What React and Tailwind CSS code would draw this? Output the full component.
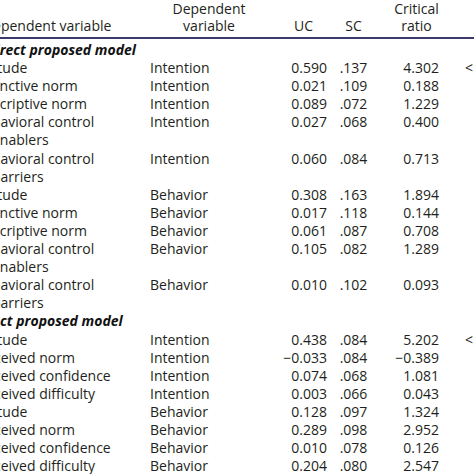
import React from "react";

// Path-model coefficient table, cropped on both sides like the source figure
const rows = [
  { head: "Direct proposed model", off: "-ml-[14px]" },
  { label: "Attitude", dep: "Intention", uc: "0.590", sc: ".137", cr: "4.302", p: "<.001" },
  { label: "Injunctive norm", dep: "Intention", uc: "0.021", sc: ".109", cr: "0.188" },
  { label: "Descriptive norm", dep: "Intention", uc: "0.089", sc: ".072", cr: "1.229" },
  { label: "Behavioral control", dep: "Intention", uc: "0.027", sc: ".068", cr: "0.400" },
  { cont: "enablers" },
  { label: "Behavioral control", dep: "Intention", uc: "0.060", sc: ".084", cr: "0.713" },
  { cont: "barriers" },
  { label: "Attitude", dep: "Behavior", uc: "0.308", sc: ".163", cr: "1.894" },
  { label: "Injunctive norm", dep: "Behavior", uc: "0.017", sc: ".118", cr: "0.144" },
  { label: "Descriptive norm", dep: "Behavior", uc: "0.061", sc: ".087", cr: "0.708" },
  { label: "Behavioral control", dep: "Behavior", uc: "0.105", sc: ".082", cr: "1.289" },
  { cont: "enablers" },
  { label: "Behavioral control", dep: "Behavior", uc: "0.010", sc: ".102", cr: "0.093" },
  { cont: "barriers" },
  { head: "Indirect proposed model", off: "-ml-[39px]" },
  { label: "Attitude", dep: "Intention", uc: "0.438", sc: ".084", cr: "5.202", p: "<.001" },
  { label: "Perceived norm", dep: "Intention", uc: "\u22120.033", sc: ".084", cr: "\u22120.389", off: "-ml-[28px]" },
  { label: "Perceived confidence", dep: "Intention", uc: "0.074", sc: ".068", cr: "1.081", off: "-ml-[28px]" },
  { label: "Perceived difficulty", dep: "Intention", uc: "0.003", sc: ".066", cr: "0.043", off: "-ml-[28px]" },
  { label: "Attitude", dep: "Behavior", uc: "0.128", sc: ".097", cr: "1.324" },
  { label: "Perceived norm", dep: "Behavior", uc: "0.289", sc: ".098", cr: "2.952", off: "-ml-[28px]" },
  { label: "Perceived confidence", dep: "Behavior", uc: "0.010", sc: ".078", cr: "0.126", off: "-ml-[28px]" },
  { label: "Perceived difficulty", dep: "Behavior", uc: "0.204", sc: ".080", cr: "2.547", off: "-ml-[28px]" },
];

function Row({ r }) {
  if (r.head) {
    return (
      <div className="h-[18.1px] overflow-hidden">
        <span className={`block whitespace-nowrap font-bold italic text-[#111] ${r.off}`}>{r.head}</span>
      </div>
    );
  }
  if (r.cont) {
    return (
      <div className="h-[18.1px] overflow-hidden">
        <span className="block whitespace-nowrap -ml-[8px]">{r.cont}</span>
      </div>
    );
  }
  return (
    <div className="flex h-[18.1px] whitespace-nowrap">
      <div className="w-[150px] shrink-0 overflow-hidden">
        <span className={`block ${r.off || "-ml-[25px]"}`}>{r.label}</span>
      </div>
      <div className="w-[130px] shrink-0">{r.dep}</div>
      <div className="w-[47px] shrink-0 text-right">{r.uc}</div>
      <div className="w-[53px] shrink-0 text-center">{r.sc}</div>
      <div className="w-[59px] shrink-0 pl-[14px] text-right">{r.cr}</div>
      <div className="w-[60px] shrink-0 pl-[26px]">{r.p}</div>
    </div>
  );
}

export default function App() {
  return (
    <div
      className="w-[474px] h-[474px] overflow-hidden bg-white text-[14px] text-[#231f20]"
      style={{ fontFamily: '"Open Sans", "Noto Sans", sans-serif' }}
    >
      {/* Header */}
      <div className="flex leading-[17px] whitespace-nowrap pb-[3px] border-b-2 border-[#3b3a6b]">
        <div className="w-[150px] shrink-0 overflow-hidden pt-[17px]">
          <span className="block -ml-[28px]">Independent variable</span>
        </div>
        <div className="w-[118px] shrink-0 text-center">
          <div>Dependent</div>
          <div>variable</div>
        </div>
        <div className="w-[12px] shrink-0" />
        <div className="w-[47px] shrink-0 text-center pt-[17px]">UC</div>
        <div className="w-[53px] shrink-0 text-center pt-[17px]">SC</div>
        <div className="w-[59px] shrink-0 pl-[14px] flex flex-col items-center">
          <div>Critical</div>
          <div>ratio</div>
        </div>
      </div>

      {/* Body */}
      <div className="pt-[2px] leading-[18.1px]">
        {rows.map((r, i) => (
          <Row key={i} r={r} />
        ))}
      </div>
    </div>
  );
}
